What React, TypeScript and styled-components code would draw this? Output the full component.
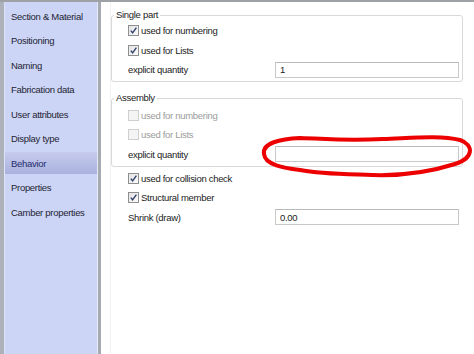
import React from "react";
import styled, { createGlobalStyle } from "styled-components";

const Global = createGlobalStyle`
  html, body { margin: 0; padding: 0; background: #fff; overflow: hidden; }
  body { font-family: "Liberation Sans", Arial, sans-serif; }
`;

const Window = styled.div`
  position: relative;
  width: 474px;
  height: 354px;
  box-sizing: border-box;
  border-top: 2px solid #9ea2a6;
  display: flex;
  background: #fff;
  font-size: 9.5px;
  letter-spacing: -0.3px;
  color: #1b1b1b;
`;

const Sidebar = styled.nav`
  width: 101px;
  flex: none;
  box-sizing: border-box;
  border-left: 4px solid #adb1b9;
  border-right: 3px solid #a6aab2;
  background: #cdd5f6;
  box-shadow: inset 1px 0 0 #dde2f6, inset -1px 0 0 #e8eaf3;
  padding: 3px 1px 0 1px;
  display: flex;
  flex-direction: column;
  gap: 2.5px;
`;

const NavItem = styled.div<{ $active?: boolean }>`
  height: 22px;
  display: flex;
  align-items: center;
  padding-left: 6px;
  color: ${(p) => (p.$active ? "#1f2c6c" : "#1d1f33")};
  background: ${(p) =>
    p.$active ? "linear-gradient(#c6cbec, #aab2de)" : "transparent"};
  white-space: nowrap;
`;

const Content = styled.main`
  flex: 1;
  padding-left: 9px;
  display: flex;
`;

const Panel = styled.div`
  flex: 1;
  border-left: 1px solid #f1f1f1;
  padding: 7px 11px 0 0;
  display: flex;
  flex-direction: column;
`;

const Group = styled.fieldset<{ $top?: number }>`
  margin: ${(p) => p.$top ?? 0}px 0 0 0;
  padding: 0 3px 1.5px 16px;
  border: 1px solid #d9d9d9;
  border-radius: 3px;
  min-width: 0;
`;

const Legend = styled.legend`
  padding: 0 2px;
  margin-left: -14px;
  line-height: 12px;
  color: #1b1b1b;
`;

const Rows = styled.div<{ $pad?: number }>`
  display: flex;
  flex-direction: column;
  padding-top: ${(p) => p.$pad ?? 0}px;
`;

const Row = styled.div`
  height: 19.5px;
  display: grid;
  grid-template-columns: 1fr 184px;
  align-items: center;
`;

const Outside = styled.div`
  margin-top: 2px;
  padding: 0 4px 0 17px;
  display: flex;
  flex-direction: column;
`;

const CheckLabel = styled.label<{ $disabled?: boolean }>`
  display: flex;
  align-items: center;
  gap: 2px;
  color: ${(p) => (p.$disabled ? "#9b9b9b" : "#1b1b1b")};
  white-space: nowrap;
`;

const Box = styled.span<{ $disabled?: boolean }>`
  width: 11px;
  height: 11px;
  box-sizing: border-box;
  border: 1px solid ${(p) => (p.$disabled ? "#cfcfcf" : "#8f8f8f")};
  background: ${(p) =>
    p.$disabled ? "#f4f4f4" : "linear-gradient(135deg, #e4e4e4, #fbfbfb)"};
  display: flex;
  align-items: center;
  justify-content: center;
`;

const Field = styled.div`
  height: 16px;
  box-sizing: border-box;
  border: 1px solid #c9c9c9;
  border-top-color: #b9b9b9;
  background: #fff;
  display: flex;
  align-items: center;
  padding-left: 4px;
  color: #1b1b1b;
`;

const Ink = styled.svg`
  position: absolute;
  inset: 0;
  pointer-events: none;
`;

const Check = ({ checked, disabled, children }: { checked?: boolean; disabled?: boolean; children: React.ReactNode }) => (
  <CheckLabel $disabled={disabled}>
    <Box $disabled={disabled}>
      {checked && (
        <svg width="9" height="9" viewBox="0 0 9 9">
          <path d="M1.8 4.6 L3.6 6.8 L7.4 1.6" fill="none" stroke="#33406e" strokeWidth="1.4" />
        </svg>
      )}
    </Box>
    {children}
  </CheckLabel>
);

const nav = [
  "Section & Material",
  "Positioning",
  "Naming",
  "Fabrication data",
  "User attributes",
  "Display type",
  "Behavior",
  "Properties",
  "Camber properties",
];

export default function App() {
  return (
    <>
      <Global />
      <Window>
        <Sidebar>
          {nav.map((n) => (
            <NavItem key={n} $active={n === "Behavior"}>
              {n}
            </NavItem>
          ))}
        </Sidebar>
        <Content>
          <Panel>
            <Group>
              <Legend>Single part</Legend>
              <Rows>
                <Row><Check checked>used for numbering</Check></Row>
                <Row><Check checked>used for Lists</Check></Row>
                <Row><span>explicit quantity</span><Field>1</Field></Row>
              </Rows>
            </Group>
            <Group $top={10}>
              <Legend>Assembly</Legend>
              <Rows $pad={1.5}>
                <Row><Check disabled>used for numbering</Check></Row>
                <Row><Check disabled>used for Lists</Check></Row>
                <Row><span>explicit quantity</span><Field /></Row>
              </Rows>
            </Group>
            <Outside>
              <Row><Check checked>used for collision check</Check></Row>
              <Row><Check checked>Structural member</Check></Row>
              <Row><span>Shrink (draw)</span><Field>0.00</Field></Row>
            </Outside>
          </Panel>
        </Content>
        <Ink width="474" height="354" viewBox="0 0 474 354">
          <path
            d="M264 152 C262 141 280 137 300 136 C330 137 345 139 383 137 C412 136 440 133 460 138 C474 143 474 156 455 162 C430 170 402 174 372 173 C342 172 320 172 300 168 C284 166 265 163 264 152 Z"
            fill="none"
            stroke="#ec0000"
            strokeWidth="4"
            strokeLinejoin="round"
          />
        </Ink>
      </Window>
    </>
  );
}
